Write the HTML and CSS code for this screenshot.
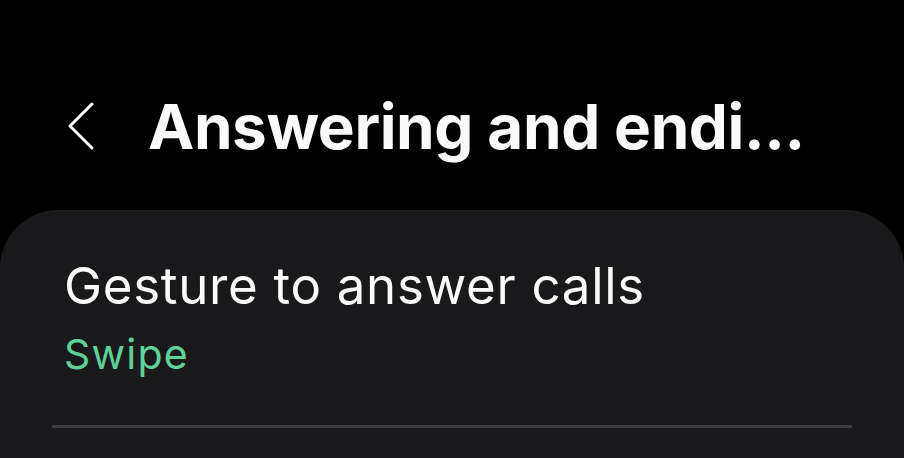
FILE: index.html
```html
<!DOCTYPE html>
<html lang="en">
<head>
<meta charset="utf-8">
<title>Answering and ending calls</title>
<link rel="stylesheet" href="styles.css">
</head>
<body>
  <header class="app-bar">
    <button class="back" aria-label="Navigate up">
      <svg width="30" height="50" viewBox="0 0 30 50" aria-hidden="true">
        <path d="M26 3 L4 25 L26 47" fill="none" stroke="#fff" stroke-width="3" stroke-linecap="round" stroke-linejoin="round"/>
      </svg>
    </button>
    <h1 class="title">Answering and endi...</h1>
  </header>
  <main class="card">
    <div class="item">
      <div class="item-title">Gesture to answer calls</div>
      <div class="item-sub">Swipe</div>
    </div>
    <div class="divider"></div>
  </main>
</body>
</html>
```
FILE: styles.css
```css
html, body {
  margin: 0;
  height: 100%;
  background: #000;
  overflow: hidden;
}
body {
  font-family: Inter, "Noto Sans", sans-serif;
  color: #fafafa;
}
.app-bar {
  height: 210px;
  display: flex;
  align-items: center;
  padding-left: 66px;
  padding-top: 42px;
  box-sizing: border-box;
}
.back {
  background: none;
  border: 0;
  padding: 0;
  width: 30px;
  height: 50px;
  display: flex;
  margin-right: 52px;
}
.title {
  margin: 0;
  font-size: 62px;
  font-weight: 700;
  letter-spacing: -0.4px;
  white-space: nowrap;
}
.card {
  background: #19191b;
  border-radius: 58px 58px 0 0;
  height: 248px;
  padding: 0 52px;
}
.item {
  padding-top: 47px;
  padding-left: 12px;
  padding-bottom: 46px;
}
.item-title {
  font-size: 51px;
  line-height: 58px;
  font-weight: 400;
  letter-spacing: 0.7px;
  color: #fafafa;
}
.item-sub {
  margin-top: 14px;
  font-size: 41px;
  line-height: 50px;
  letter-spacing: 1.2px;
  color: #5fd197;
}
.divider {
  height: 3px;
  background: #3d3d3f;
}
```
